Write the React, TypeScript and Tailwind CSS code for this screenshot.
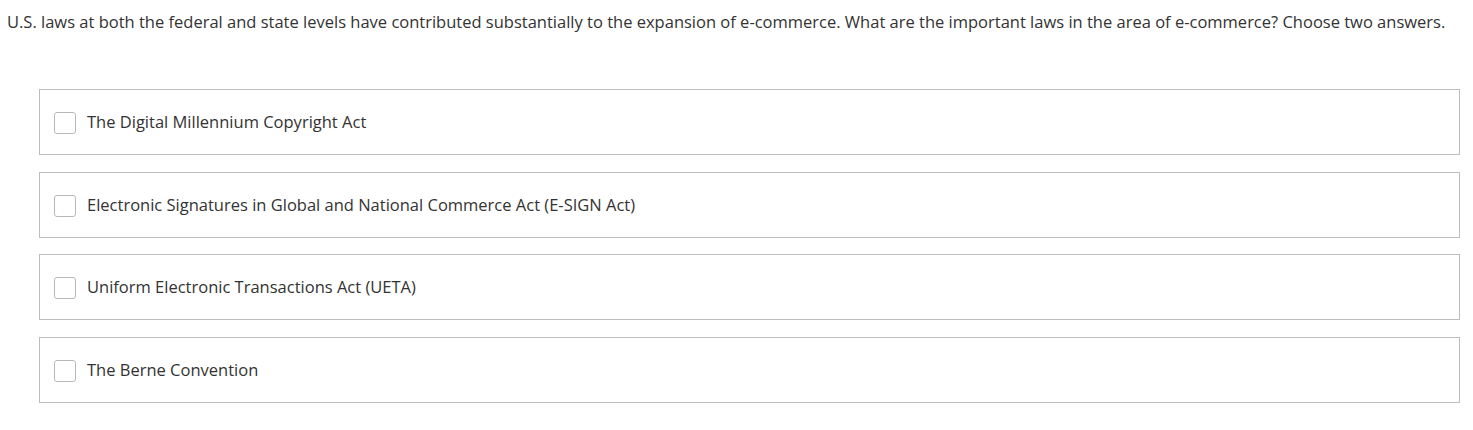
const OPTIONS = [
  { text: "The Digital Millennium Copyright Act", gap: "mt-0" },
  { text: "Electronic Signatures in Global and National Commerce Act (E-SIGN Act)", gap: "mt-[17px]" },
  { text: "Uniform Electronic Transactions Act (UETA)", gap: "mt-[16px]" },
  { text: "The Berne Convention", gap: "mt-[17px]" },
];

export default function App() {
  return (
    <div
      className="w-[1473px] h-[430px] bg-white text-[#333333]"
      style={{ fontFamily: '"Open Sans", sans-serif' }}
    >
      <p className="pl-[7px] pt-[11px] text-[16.5px] leading-[22px]">
        U.S. laws at both the federal and state levels have contributed substantially to the
        expansion of e-commerce. What are the important laws in the area of e-commerce? Choose two
        answers.
      </p>

      <div className="ml-[39px] mr-[13px] mt-[56px] flex flex-col">
        {OPTIONS.map((opt) => (
          <label
            key={opt.text}
            className={`${opt.gap} flex h-[66px] items-center border border-[#bdbdbd] bg-white pl-[14px]`}
          >
            <span className="mt-[1px] h-[22px] w-[22px] shrink-0 rounded-[3px] border border-[#b8b8b8] bg-white" />
            <span className="ml-[11px] text-[16.5px] leading-[22px] text-[#333333]">{opt.text}</span>
          </label>
        ))}
      </div>
    </div>
  );
}
